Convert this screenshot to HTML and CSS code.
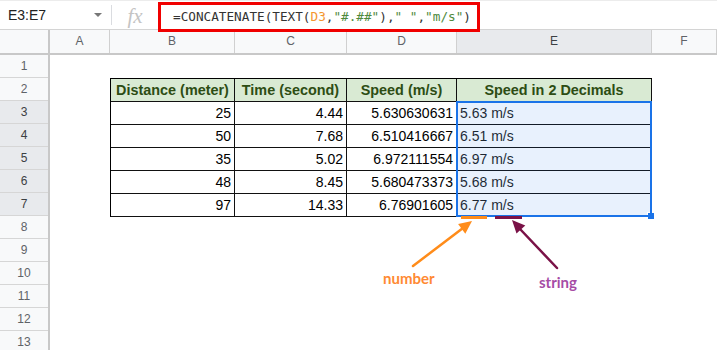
FILE: index.html
```html
<!DOCTYPE html>
<html lang="en">
<head>
    <meta charset="UTF-8">
    <title>Speed in 2 Decimals</title>
    <link rel="stylesheet" href="styles.css">
</head>
<body>
    <div class="page">
        <div class="topbar">
            <div class="namebox"><span>E3:E7</span><span class="caret"></span></div>
            <div class="fx">fx</div>
            <div class="formula">=CONCATENATE(TEXT(<span class="ref">D3</span>,<span class="str">"#.##"</span>),<span class="str">" "</span>,<span class="str">"m/s"</span>)</div>
        </div>

        <div class="sheet">
            <div class="corner"></div>
            <div class="colheads">
                <div>A</div>
                <div>B</div>
                <div>C</div>
                <div>D</div>
                <div class="on">E</div>
                <div>F</div>
            </div>
            <div class="rowheads">
                <div>1</div>
                <div>2</div>
                <div class="on">3</div>
                <div class="on">4</div>
                <div class="on">5</div>
                <div class="on">6</div>
                <div class="on">7</div>
                <div>8</div>
                <div>9</div>
                <div>10</div>
                <div>11</div>
                <div>12</div>
                <div>13</div>
            </div>
            <div class="cells">
                <div class="tbl">
                    <div class="th">Distance (meter)</div>
                    <div class="th">Time (second)</div>
                    <div class="th">Speed (m/s)</div>
                    <div class="th">Speed in 2 Decimals</div>

                    <div class="num">25</div>
                    <div class="num">4.44</div>
                    <div class="num">5.630630631</div>
                    <div class="txt">5.63 m/s</div>

                    <div class="num">50</div>
                    <div class="num">7.68</div>
                    <div class="num">6.510416667</div>
                    <div class="txt">6.51 m/s</div>

                    <div class="num">35</div>
                    <div class="num">5.02</div>
                    <div class="num">6.972111554</div>
                    <div class="txt">6.97 m/s</div>

                    <div class="num">48</div>
                    <div class="num">8.45</div>
                    <div class="num">5.680473373</div>
                    <div class="txt">5.68 m/s</div>

                    <div class="num">97</div>
                    <div class="num">14.33</div>
                    <div class="num">6.76901605</div>
                    <div class="txt">6.77 m/s</div>

                    <div class="sel"><span class="handle"></span></div>
                    <div class="active"></div>
                </div>
            </div>
        </div>

        <!-- annotations drawn on top of the sheet -->
        <svg class="notes" width="717" height="350" viewBox="0 0 717 350">
            <line x1="461" y1="217.5" x2="487" y2="217.5" stroke="#ff8c1a" stroke-width="3"/>
            <line x1="495" y1="217.5" x2="522" y2="217.5" stroke="#7a1247" stroke-width="3"/>
            <line x1="413" y1="266" x2="463" y2="228" stroke="#ff8c1a" stroke-width="2.5" stroke-linecap="round"/>
            <polygon points="472,221 465.3,233.7 458.1,224.1" fill="#ff8c1a"/>
            <line x1="557" y1="268" x2="520" y2="229" stroke="#7a1247" stroke-width="2.5" stroke-linecap="round"/>
            <polygon points="512,220 525.3,225.4 516.5,233.6" fill="#7a1247"/>
        </svg>
        <span class="note number">number</span>
        <span class="note string">string</span>
    </div>
</body>
</html>
```

FILE: styles.css
```css
body {
    margin: 0;
    background-color: #fff;
    font-family: Arial, "Liberation Sans", sans-serif;
    overflow: hidden;
}
.page {
    position: relative;
    width: 717px;
    height: 350px;
    overflow: hidden;
}

/* formula bar */
.topbar {
    display: flex;
    align-items: flex-start;
    height: 30px;
    box-sizing: border-box;
    border-top: 1px solid #ececec;
    border-bottom: 1px solid #d4d4d4;
}
.namebox {
    display: flex;
    align-items: center;
    justify-content: space-between;
    width: 112px;
    height: 20px;
    margin-top: 4px;
    padding: 0 9px 0 8px;
    box-sizing: border-box;
    border-right: 1px solid #dadce0;
    font-size: 14px;
    color: #222;
}
.caret {
    width: 0;
    height: 0;
    border-left: 4px solid transparent;
    border-right: 4px solid transparent;
    border-top: 4px solid #777;
}
.fx {
    width: 46px;
    padding-top: 3px;
    text-align: center;
    font-family: "Liberation Serif", serif;
    font-style: italic;
    font-size: 21px;
    color: #c4c4c4;
}
.formula {
    position: relative;
    z-index: 1;
    width: 322px;
    height: 30px;
    margin-top: 1px;
    padding-left: 12px;
    box-sizing: border-box;
    border: 3px solid #f00000;
    background-color: #fff;
    font-family: "DejaVu Sans Mono", "Liberation Mono", monospace;
    font-size: 12.7px;
    line-height: 23px;
    color: #333;
    white-space: nowrap;
}
.ref {
    color: #f4962e;
}
.str {
    color: #4e8a3c;
}

/* sheet */
.sheet {
    display: grid;
    grid-template-columns: 50px 1fr;
    grid-template-rows: 25px 1fr;
}
.corner {
    background-color: #f8f9fa;
    border-right: 2px solid #c8c8c8;
    border-bottom: 2px solid #c8c8c8;
}
.colheads {
    display: grid;
    grid-template-columns: 60px 125px 112px 110px 195px 1fr;
    background-color: #f8f9fa;
    border-bottom: 2px solid #c8c8c8;
}
.colheads div {
    border-right: 1px solid #d0d0d0;
    text-align: center;
    font-size: 12px;
    line-height: 23px;
    color: #5f6368;
}
.colheads .on,
.rowheads .on {
    background-color: #e8eaed;
    color: #3c4043;
}
.rowheads {
    display: flex;
    flex-direction: column;
    background-color: #f8f9fa;
    border-right: 2px solid #c8c8c8;
}
.rowheads div {
    height: 23px;
    box-sizing: border-box;
    border-bottom: 1px solid #d6d6d6;
    text-align: center;
    font-size: 12px;
    line-height: 22px;
    color: #5f6368;
}
.cells {
    padding: 23px 0 0 60px;
}

/* data table B2:E7 */
.tbl {
    position: relative;
    display: grid;
    grid-template-columns: 124px 112px 110px 195px;
    grid-template-rows: repeat(6, 23px);
    width: max-content;
    border-left: 1px solid #000;
    border-top: 1px solid #000;
}
.tbl div {
    box-sizing: border-box;
    border-right: 1px solid #111;
    border-bottom: 1px solid #111;
    font-size: 14px;
    line-height: 22px;
    color: #000;
    white-space: nowrap;
}
.tbl .th {
    background-color: #d9ead3;
    color: #2d4d14;
    font-weight: bold;
    font-size: 14.4px;
    text-align: center;
}
.tbl .num {
    text-align: right;
    padding-right: 3px;
}
.tbl .txt {
    padding-left: 3px;
    color: #1f1f1f;
}
/* selection E3:E7, laid over the cells of its grid area */
.tbl .sel {
    position: absolute;
    grid-column: 4;
    grid-row: 2 / 7;
    top: -1px;
    left: -1px;
    right: 0;
    bottom: 0;
    border: 1px solid #1a73e8;
    background-color: rgba(26, 115, 232, 0.1);
}
.tbl .active {
    position: absolute;
    grid-column: 4;
    grid-row: 2;
    top: -1px;
    left: -1px;
    right: 0;
    bottom: 0;
    border: 2px solid #1a73e8;
}
.handle {
    position: absolute;
    right: -4px;
    bottom: -4px;
    width: 6px;
    height: 6px;
    background-color: #1a73e8;
    border: 1px solid #fff;
}

/* annotations */
.notes {
    position: absolute;
    top: 0;
    left: 0;
}
.note {
    position: absolute;
    font-family: Lato, "Open Sans", sans-serif;
    font-weight: bold;
    font-size: 15px;
    line-height: 1;
}
.number {
    left: 383px;
    top: 271px;
    color: #ff8a33;
}
.string {
    left: 539px;
    top: 275px;
    color: #a64ca6;
}
```
